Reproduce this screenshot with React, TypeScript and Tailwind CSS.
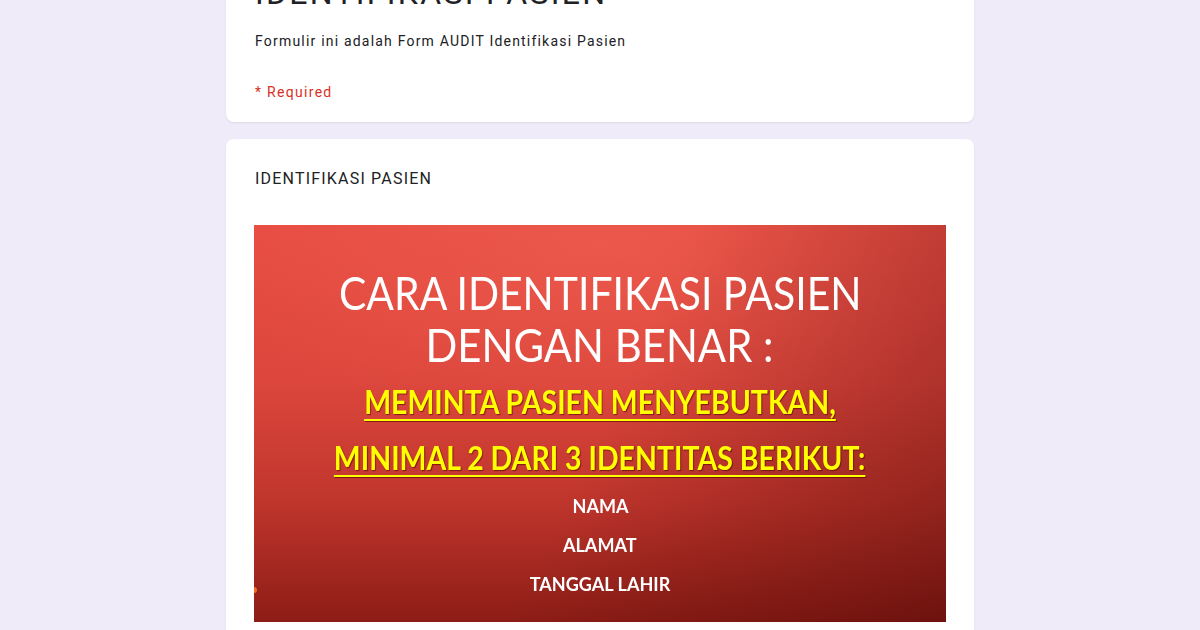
export default function App() {
  return (
    <div className="min-h-[630px] w-full overflow-hidden bg-[#f0ebf8] font-['Roboto',sans-serif]">
      <div className="mx-auto flex w-[748px] flex-col gap-[17px]">
        {/* header card, scrolled so the title is mostly off screen */}
        <section className="-mt-[49px] rounded-lg bg-white px-[29px] pt-[22px] pb-[20px] shadow-[0_1px_2px_rgba(0,0,0,0.08)]">
          <h1 className="text-[32px] leading-[40px] tracking-[2.3px] text-[#202124]">IDENTIFIKASI PASIEN</h1>
          <p className="mt-[18px] text-[14px] leading-[20px] tracking-[1.2px] text-[#202124]">
            Formulir ini adalah Form AUDIT Identifikasi Pasien
          </p>
          <p className="mt-[31px] text-[14px] leading-[20px] tracking-[1.3px] text-[#d93025]">* Required</p>
        </section>

        <section className="rounded-lg bg-white px-[28px] pt-[28px] pb-[20px] shadow-[0_1px_2px_rgba(0,0,0,0.08)]">
          <h2 className="pl-px text-[16px] leading-[24px] tracking-[1.2px] text-[#202124]">IDENTIFIKASI PASIEN</h2>
          <div className="relative mt-[34px] h-[397px] w-[692px] overflow-hidden bg-[linear-gradient(180deg,#e84c42_0%,#dc463c_40%,#bf352c_70%,#8c1d16_100%)] font-['Lato',sans-serif]">
            <div className="absolute inset-0 bg-[radial-gradient(ellipse_60%_45%_at_50%_5%,rgba(240,100,85,0.5)_0%,rgba(240,100,85,0)_100%)]" />
            <div className="absolute inset-0 bg-[linear-gradient(115deg,rgba(0,0,0,0)_50%,rgba(60,0,0,0.38)_100%)]" />
            <div className="relative flex flex-col items-center pt-[41px]">
              <p className="scale-x-[0.87] text-[47px] leading-[52px] text-white">CARA IDENTIFIKASI PASIEN</p>
              <p className="scale-x-[0.89] text-[47px] leading-[52px] text-white">DENGAN BENAR :</p>
              <p className="mt-[4px] scale-x-[0.89] text-[32px] font-bold leading-[56px] text-[#ffff00] underline decoration-[2px] underline-offset-[5px] [text-shadow:1px_1px_1px_rgba(80,0,0,0.6)]">
                MEMINTA PASIEN MENYEBUTKAN,
              </p>
              <p className="scale-x-[0.89] text-[32px] font-bold leading-[56px] text-[#ffff00] underline decoration-[2px] underline-offset-[5px] [text-shadow:1px_1px_1px_rgba(80,0,0,0.6)]">
                MINIMAL 2 DARI 3 IDENTITAS BERIKUT:
              </p>
              <p className="scale-x-[0.95] text-[19px] font-bold leading-[39px] text-white">NAMA</p>
              <p className="scale-x-[0.95] text-[19px] font-bold leading-[39px] text-white">ALAMAT</p>
              <p className="scale-x-[0.95] text-[19px] font-bold leading-[39px] text-white">TANGGAL LAHIR</p>
            </div>
            <span className="absolute left-[-3px] top-[362px] h-[6px] w-[6px] rounded-full bg-[#f26b2a]" />
          </div>
        </section>
      </div>
    </div>
  )
}
